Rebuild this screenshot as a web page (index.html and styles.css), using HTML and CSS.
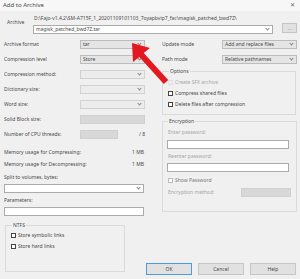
FILE: index.html
```html
<!DOCTYPE html>
<html lang="en">
<head>
    <meta charset="UTF-8">
    <title>Add to Archive</title>
    <link rel="stylesheet" href="styles.css">
</head>
<body>
    <div class="titlebar">
        <span class="title">Add to Archive</span>
        <span class="close">✕</span>
    </div>

    <div class="archive">
        <span class="archive-label">Archive</span>
        <div class="archive-body">
            <div class="path">D:\Fajo-v1.4.2\SM-A715F_1_20201109101103_7oyapbvip7_fac\magisk_patched_bwd7Z\</div>
            <div class="archive-input">
                <div class="combo edit name"><span>magisk_patched_bwd7Z.tar</span></div>
                <div class="browse">...</div>
            </div>
        </div>
    </div>

    <div class="main">
        <div class="left">
            <div class="row"><span class="label">Archive format</span><div class="combo"><span>tar</span></div></div>
            <div class="row"><span class="label">Compression level</span><div class="combo"><span>Store</span></div></div>
            <div class="row"><span class="label">Compression method:</span><div class="combo off"><span></span></div></div>
            <div class="row"><span class="label">Dictionary size:</span><div class="combo off"><span></span></div></div>
            <div class="row"><span class="label">Word size:</span><div class="combo off"><span></span></div></div>
            <div class="row"><span class="label">Solid Block size:</span><div class="box solid"></div></div>
            <div class="row"><span class="label">Number of CPU threads:</span><div class="box threads"></div><span class="of">/ 8</span></div>

            <div class="mem first"><span>Memory usage for Compressing:</span><span>1 MB</span></div>
            <div class="mem"><span>Memory usage for Decompressing:</span><span>1 MB</span></div>

            <div class="caption">Split to volumes, bytes:</div>
            <div class="combo edit full"><span></span></div>
            <div class="caption">Parameters:</div>
            <div class="input full"></div>

            <fieldset class="group ntfs">
                <legend>NTFS</legend>
                <div class="check"><i class="box-check"></i>Store symbolic links</div>
                <div class="check"><i class="box-check"></i>Store hard links</div>
            </fieldset>
        </div>

        <div class="right">
            <div class="right-col">
                <div class="row"><span class="label wide">Update mode</span><div class="combo long"><span>Add and replace files</span></div></div>
                <div class="row"><span class="label wide">Path mode</span><div class="combo long"><span>Relative pathnames</span></div></div>

                <fieldset class="group options">
                    <legend>Options</legend>
                    <div class="check disabled"><i class="box-check"></i>Create SFX archive</div>
                    <div class="check"><i class="box-check"></i>Compress shared files</div>
                    <div class="check"><i class="box-check"></i>Delete files after compression</div>
                </fieldset>

                <fieldset class="group encryption">
                    <legend>Encryption</legend>
                    <div class="caption disabled">Enter password:</div>
                    <div class="input pass"></div>
                    <div class="caption disabled">Reenter password:</div>
                    <div class="input pass"></div>
                    <div class="check dim"><i class="box-check"></i>Show Password</div>
                    <div class="method"><span class="disabled">Encryption method:</span><div class="box enc"></div></div>
                </fieldset>
            </div>

            <div class="buttons">
                <div class="button default">OK</div>
                <div class="button">Cancel</div>
                <div class="button">Help</div>
            </div>
        </div>
    </div>

    <svg class="pointer" width="300" height="279" viewBox="0 0 300 279">
        <polygon points="132,43 150,48 143.7,53 168.2,80 163.8,84 139.3,57 133,62" fill="#e3191f"/>
    </svg>
</body>
</html>
```

FILE: styles.css
```css
* {
    box-sizing: border-box;
}
body {
    margin: 0;
    width: 300px;
    height: 279px;
    overflow: hidden;
    position: relative;
    background: #f0f0f0;
    font-family: "Noto Sans", "Liberation Sans", sans-serif;
    font-size: 5px;
    line-height: 7px;
    color: #4a4a4a;
}
.titlebar {
    height: 11px;
    display: flex;
    justify-content: space-between;
    align-items: center;
    padding: 0 5px 0 3px;
    background: #f7f7f7;
}
.title {
    font-size: 6px;
}
.close {
    font-size: 6px;
    color: #666;
}

/* archive name */
.archive {
    display: flex;
    padding: 4px 3px 0 7px;
}
.archive-label {
    width: 26px;
    padding-top: 3.5px;
}
.archive-body {
    flex: 1;
}
.path {
    padding-left: 1px;
    white-space: nowrap;
}
.archive-input {
    display: flex;
    gap: 9px;
    margin-top: 3px;
}
.browse {
    width: 15px;
    height: 10px;
    margin-top: -2px;
    background: #e1e1e1;
    border: 1px solid #c4c4c4;
    color: #999;
    text-align: center;
    line-height: 9px;
}

/* combos and boxes */
.combo {
    display: flex;
    justify-content: space-between;
    align-items: center;
    height: 9px;
    width: 65px;
    padding: 0 3px 0 2px;
    background: #e5e5e5;
    border: 1px solid #bcbcbc;
}
.combo::after {
    content: '';
    width: 2px;
    height: 2px;
    margin-top: -1.5px;
    border-right: 0.7px solid #888;
    border-bottom: 0.7px solid #888;
    transform: rotate(45deg);
}
.combo.off {
    background: #ececec;
    border-color: #d2d2d2;
}
.combo.edit {
    background: #fff;
    border-color: #ababab;
}
.combo.name {
    width: 240px;
}
.combo.long {
    width: 75px;
}
.full {
    width: 140px;
}
.box {
    flex: none;
    height: 9px;
    background: #d8d8d8;
    border: 1px solid #d0d0d0;
}
.box.solid {
    width: 65px;
}
.box.threads {
    width: 38px;
}
.box.enc {
    width: 50px;
}
.of {
    margin-left: 21px;
    white-space: nowrap;
}
.input {
    height: 9px;
    background: #fff;
    border: 1px solid #ababab;
}

/* layout */
.main {
    display: flex;
    margin-top: 6px;
    padding-left: 4px;
}
.left {
    width: 141px;
    padding-bottom: 3px;
}
.right {
    flex: 1;
    display: flex;
    flex-direction: column;
    padding-right: 3px;
}
.right-col {
    padding-left: 17px;
}
.row {
    display: flex;
    align-items: center;
    height: 9px;
}
.row + .row {
    margin-top: 6px;
}
.label {
    flex: none;
    width: 76px;
    white-space: nowrap;
}
.label.wide {
    width: 60px;
}
.mem {
    display: flex;
    justify-content: space-between;
    align-items: center;
    height: 12px;
    padding-right: 1px;
}
.mem.first {
    margin-top: 7px;
}
.caption {
    margin-top: 4px;
    margin-bottom: 3px;
}
.disabled {
    color: #a6a6a6;
}
.dim {
    color: #7a7a7a;
}

/* group boxes */
.group {
    margin: 0;
    padding: 0 5px;
    border: 1px solid #dadada;
    min-width: 0;
}
.group legend {
    padding: 0 1px;
    margin-left: 1px;
    line-height: 7px;
}
.ntfs {
    margin: 6px 0 0 1px;
    width: 120px;
    height: 50px;
    padding-top: 1px;
}
.options {
    margin-top: 4px;
    width: 134px;
    padding-top: 2px;
    padding-bottom: 4px;
}
.encryption {
    margin-top: 3px;
    width: 135px;
    padding: 0 7px 14px 4px;
}
.encryption .caption {
    padding-left: 1px;
    margin-top: 4px;
    margin-bottom: 3.5px;
}
.encryption .check {
    margin-top: 3px;
    padding-left: 1px;
}
.check {
    display: flex;
    align-items: center;
    height: 11px;
    white-space: nowrap;
}
.box-check {
    width: 5px;
    height: 5px;
    margin-right: 2px;
    background: #fff;
    border: 0.7px solid #444;
}
.check.disabled .box-check {
    border-color: #e0e0e0;
    background: transparent;
}
.check.dim .box-check {
    border-color: #bbb;
}
.method {
    display: flex;
    align-items: center;
    justify-content: space-between;
    margin-top: 1.5px;
    padding-left: 1px;
    margin-right: -2px;
}

/* buttons */
.buttons {
    display: flex;
    justify-content: flex-end;
    gap: 6px;
    margin-top: auto;
    padding-right: 1px;
}
.button {
    width: 46px;
    height: 12px;
    line-height: 10px;
    text-align: center;
    background: #e1e1e1;
    border: 1px solid #c6c6c6;
}
.button.default {
    border-color: #4d9be0;
}

.pointer {
    position: absolute;
    top: 0;
    left: 0;
}
```
